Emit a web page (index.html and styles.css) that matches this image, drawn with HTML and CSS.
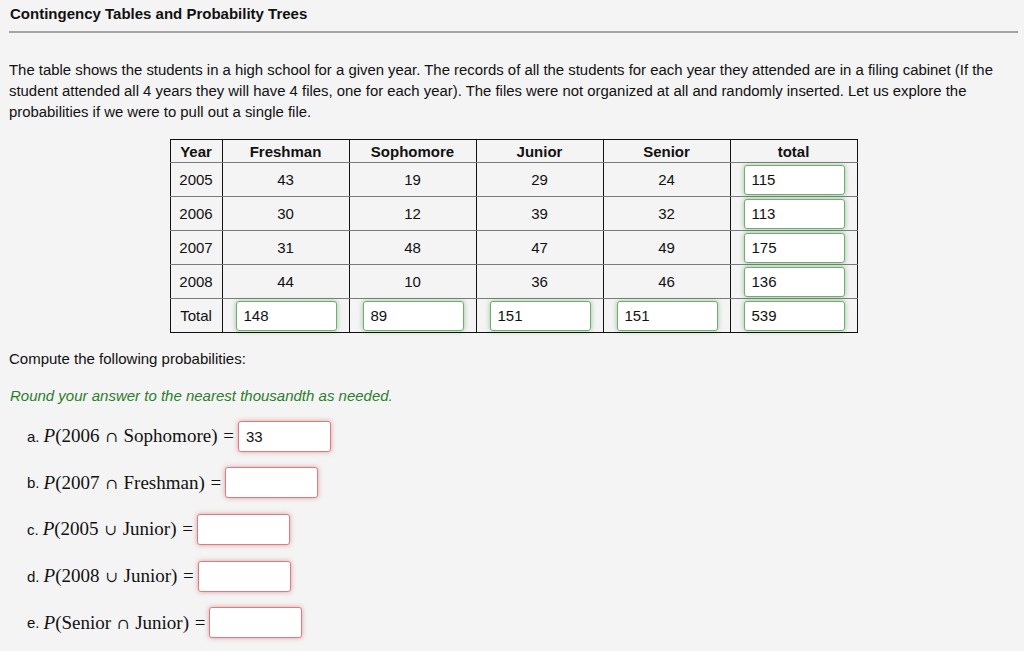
FILE: index.html
```html
<!DOCTYPE html>
<html>
<head>
<meta charset="utf-8">
<link rel="stylesheet" href="styles.css">
</head>
<body>
<div class="page">
  <h1 class="title">Contingency Tables and Probability Trees</h1>
  <hr class="rule">
  <p class="intro">The table shows the students in a high school for a given year. The records of all the students for each year they attended are in a filing cabinet (If the student attended all 4 years they will have 4 files, one for each year). The files were not organized at all and randomly inserted. Let us explore the probabilities if we were to pull out a single file.</p>

  <table class="ct">
    <colgroup>
      <col class="c-year"><col class="c-val"><col class="c-val"><col class="c-val"><col class="c-val"><col class="c-val">
    </colgroup>
    <tr class="head"><th>Year</th><th>Freshman</th><th>Sophomore</th><th>Junior</th><th>Senior</th><th>total</th></tr>
    <tr><td>2005</td><td>43</td><td>19</td><td>29</td><td>24</td><td class="inp"><input class="ok" value="115"></td></tr>
    <tr><td>2006</td><td>30</td><td>12</td><td>39</td><td>32</td><td class="inp"><input class="ok" value="113"></td></tr>
    <tr><td>2007</td><td>31</td><td>48</td><td>47</td><td>49</td><td class="inp"><input class="ok" value="175"></td></tr>
    <tr><td>2008</td><td>44</td><td>10</td><td>36</td><td>46</td><td class="inp"><input class="ok" value="136"></td></tr>
    <tr><td>Total</td><td class="inp"><input class="ok" value="148"></td><td class="inp"><input class="ok" value="89"></td><td class="inp"><input class="ok" value="151"></td><td class="inp"><input class="ok" value="151"></td><td class="inp"><input class="ok" value="539"></td></tr>
  </table>

  <p class="compute">Compute the following probabilities:</p>
  <p class="hint">Round your answer to the nearest thousandth as needed.</p>

  <ol class="qs">
    <li><span class="lbl">a.</span> <span class="m"><i>P</i>(2006 <span class="op">∩</span> Sophomore) <span class="eq">=</span></span><input class="bad" value="33"></li>
    <li><span class="lbl">b.</span> <span class="m"><i>P</i>(2007 <span class="op">∩</span> Freshman) <span class="eq">=</span></span><input class="bad" value=""></li>
    <li><span class="lbl">c.</span> <span class="m"><i>P</i>(2005 <span class="op">∪</span> Junior) <span class="eq">=</span></span><input class="bad" value=""></li>
    <li><span class="lbl">d.</span> <span class="m"><i>P</i>(2008 <span class="op">∪</span> Junior) <span class="eq">=</span></span><input class="bad" value=""></li>
    <li><span class="lbl">e.</span> <span class="m"><i>P</i>(Senior <span class="op">∩</span> Junior) <span class="eq">=</span></span><input class="bad" value=""></li>
  </ol>
</div>
</body>
</html>
```

FILE: styles.css
```css
html, body {
  margin: 0;
  padding: 0;
  background: #f4f4f4;
}
body {
  font-family: "Liberation Sans", Arial, sans-serif;
  color: #111;
  font-size: 15px;
}
.page {
  padding: 6px 6px 0 9px;
}
.title {
  font-size: 15px;
  font-weight: bold;
  margin: 0 0 0 1px;
  line-height: 16px;
}
.rule {
  border: 0;
  height: 2px;
  background: #a3a3a3;
  margin: 9px 0 0 0;
}
.intro {
  margin: 27px 0 0 0;
  line-height: 21px;
  font-size: 14.9px;
}
.ct {
  border-collapse: collapse;
  margin: 16px auto 0 auto;
}
.c-year { width: 52px; }
.c-val { width: 127px; }
.ct th, .ct td {
  border-left: 1px solid #111;
  border-right: 1px solid #111;
  border-top: 1px solid #7a7a7a;
  border-bottom: 1px solid #7a7a7a;
  text-align: center;
  font-size: 15px;
  padding: 0;
}
.ct tr:first-child th { border-top-color: #111; }
.ct tr:last-child td { border-bottom-color: #111; }
.ct th {
  height: 22px;
  font-weight: bold;
}
.ct td {
  height: 33px;
}
.ct td.inp {
  padding: 0 12px 0 13px;
}
input {
  box-sizing: border-box;
  font-family: "Liberation Sans", Arial, sans-serif;
  font-size: 15px;
  color: #111;
  background: #fff;
  border-radius: 3px;
  padding: 0 0 0 7px;
  outline: none;
}
input.ok {
  width: 100%;
  height: 30px;
  border: 1px solid #6fae6f;
  box-shadow: 0 0 5px rgba(90, 160, 90, 0.6);
  display: block;
}
input.bad {
  width: 93px;
  height: 31px;
  border: 1px solid #d87e80;
  box-shadow: 0 0 5px rgba(210, 90, 90, 0.55);
  vertical-align: middle;
}
.compute {
  margin: 15px 0 0 0;
  line-height: 21px;
}
.hint {
  margin: 16px 0 0 1px;
  line-height: 21px;
  font-style: italic;
  color: #2b7d2b;
}
.qs {
  list-style: none;
  margin: 7px 0 0 0;
  padding: 0 0 0 18px;
}
.qs li {
  height: 46.6px;
  display: flex;
  align-items: center;
}
.lbl {
  font-size: 15px;
  margin-right: 4px;
}
.m {
  font-family: "Liberation Serif", "Times New Roman", serif;
  font-size: 19px;
  margin-right: 4px;
}
.op {
  font-family: "DejaVu Serif", serif;
  font-size: 15px;
  margin: 0 1px;
}
.eq {
  margin-left: 1px;
}
```
